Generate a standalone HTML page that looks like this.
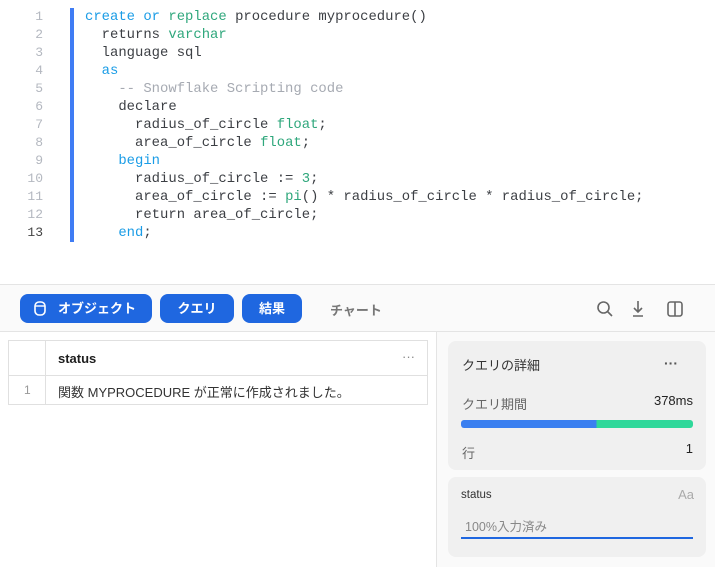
<!DOCTYPE html>
<html><head><meta charset="utf-8"><style>
*{margin:0;padding:0;box-sizing:border-box}
body{width:715px;height:567px;background:#fff;font-family:"Liberation Sans","Noto Sans CJK JP",sans-serif;position:relative;overflow:hidden;color:#1e1e1e}
.code{position:absolute;top:8px;left:0;width:715px;height:240px;font-family:"Liberation Mono",monospace;font-size:13.9px;line-height:18px;white-space:pre}
.ln{position:absolute;left:0;top:0;width:43px;text-align:right;color:#b4b8c0;font-size:13px}
.bar{position:absolute;left:70px;top:8px;width:4px;height:234px;background:#3f7cf4}
.src{position:absolute;left:85px;top:0;color:#3c3f44}
.k{color:#1a9ce6}.g{color:#2fa77c}.c{color:#a6aab2}
.tb{position:absolute;top:284px;left:0;width:715px;height:48px;background:#fafafa;border-top:1px solid #e4e4e4;border-bottom:1px solid #e4e4e4}
.btn{position:absolute;top:9px;height:29px;background:#1f67e0;color:#fff;border-radius:8px;font-size:13px;font-weight:bold;line-height:29px;text-align:center}
.panel{position:absolute;left:436px;top:332px;width:279px;height:235px;background:#fafafa;border-left:1px solid #e4e4e4}
.card{position:absolute;left:11px;width:258px;background:#f0f0f0;border-radius:8px}
</style></head><body>
<div class="bar"></div>
<div class="code"><div class="ln">1
2
3
4
5
6
7
8
9
10
11
12
<span style="color:#444">13</span></div><div class="src"><span class="k">create or</span> <span class="g">replace</span> procedure myprocedure()
  returns <span class="g">varchar</span>
  language sql
  <span class="k">as</span>
    <span class="c">-- Snowflake Scripting code</span>
    declare
      radius_of_circle <span class="g">float</span>;
      area_of_circle <span class="g">float</span>;
    <span class="k">begin</span>
      radius_of_circle := <span class="g">3</span>;
      area_of_circle := <span class="g">pi</span>() * radius_of_circle * radius_of_circle;
      return area_of_circle;
    <span class="k">end</span>;</div></div>
<div class="tb">
<div class="btn" style="left:20px;width:132px"><svg width="12" height="15" viewBox="0 0 12 15" style="position:absolute;left:14px;top:7px"><rect x="1" y="1" width="10" height="13" rx="4" fill="none" stroke="#fff" stroke-width="1.6"/><line x1="1" y1="5" x2="11" y2="5" stroke="#fff" stroke-width="1.4"/></svg><span style="margin-left:22px">オブジェクト</span></div>
<div class="btn" style="left:160px;width:74px">クエリ</div>
<div class="btn" style="left:242px;width:60px">結果</div>
<div style="position:absolute;left:330px;top:15px;font-size:13px;color:#777;font-weight:bold">チャート</div>
<svg style="position:absolute;left:596px;top:15px" width="18" height="18" viewBox="0 0 18 18"><circle cx="7.5" cy="7.5" r="5.5" fill="none" stroke="#666" stroke-width="1.6"/><line x1="11.5" y1="11.5" x2="16" y2="16" stroke="#666" stroke-width="1.6"/></svg>
<svg style="position:absolute;left:631px;top:14px" width="14" height="20" viewBox="0 0 14 20"><path d="M7 2V13M3 9L7 13L11 9M2 17H12" fill="none" stroke="#666" stroke-width="1.6"/></svg>
<svg style="position:absolute;left:666px;top:15px" width="18" height="18" viewBox="0 0 18 18"><rect x="2" y="2" width="14" height="14" rx="2.5" fill="none" stroke="#666" stroke-width="1.6"/><line x1="9" y1="2" x2="9" y2="16" stroke="#666" stroke-width="1.6"/></svg>
</div>
<div style="position:absolute;left:8px;top:340px;width:420px;height:65px;border:1px solid #e0e0e0">
<div style="position:absolute;left:36px;top:0;width:1px;height:63px;background:#e0e0e0"></div>
<div style="position:absolute;left:0;top:34px;width:418px;height:1px;background:#e0e0e0"></div>
<div style="position:absolute;left:49px;top:10px;font-size:13px;font-weight:bold">status</div>
<div style="position:absolute;right:12px;top:8px;font-size:13px;color:#888">···</div>
<div style="position:absolute;left:15px;top:42px;font-size:12px;color:#999">1</div>
<div style="position:absolute;left:49px;top:41px;font-size:13px;color:#333">関数 MYPROCEDURE が正常に作成されました。</div>
</div>
<div class="panel">
<div class="card" style="top:9px;height:129px">
<div style="position:absolute;left:14px;top:14px;font-size:13px;color:#333">クエリの詳細</div>
<div style="position:absolute;left:216px;top:14px;font-size:14px;color:#555;font-weight:bold">···</div>
<div style="position:absolute;left:14px;top:53px;font-size:13px;color:#666">クエリ期間</div>
<div style="position:absolute;right:13px;top:52px;font-size:13px;color:#222">378ms</div>
<div style="position:absolute;left:13px;top:79px;width:232px;height:8px;border-radius:3px;background:linear-gradient(90deg,#3a7ff0 0,#3a7ff0 58.5%,#2fd89a 58.5%)"></div>
<div style="position:absolute;left:14px;top:102px;font-size:13px;color:#666">行</div>
<div style="position:absolute;right:13px;top:100px;font-size:13px;color:#222">1</div>
</div>
<div class="card" style="top:145px;height:80px">
<div style="position:absolute;left:13px;top:12px;font-size:11.5px;color:#333">status</div>
<div style="position:absolute;right:12px;top:10px;font-size:13px;color:#aaa">Aa</div>
<div style="position:absolute;left:17px;top:39px;font-size:12.5px;color:#888">100%入力済み</div>
<div style="position:absolute;left:13px;top:60px;width:232px;height:2px;background:#1f67e0"></div>
</div>
</div>
</body></html>
